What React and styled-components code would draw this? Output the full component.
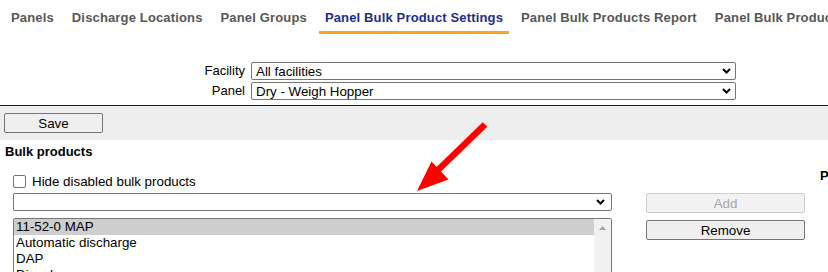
import React from "react";
import styled, { createGlobalStyle } from "styled-components";

const Global = createGlobalStyle`
  html, body { margin: 0; padding: 0; background: #fff; overflow: hidden; }
  body { font-family: "Liberation Sans", Arial, sans-serif; color: #000; }
  * { box-sizing: border-box; }
`;

const Page = styled.div`
  position: relative;
  width: 100%;
  height: 272px;
  overflow: hidden;
`;

const TabBar = styled.nav`
  display: flex;
  gap: 6px;
  padding-left: 5px;
  white-space: nowrap;
  overflow: hidden;
`;

const Tab = styled.a`
  flex-shrink: 0;
  padding: 9px 6px 4px;
  line-height: 18px;
  font-size: 13px;
  letter-spacing: 0.15px;
  font-weight: bold;
  text-decoration: none;
  color: ${(p) => (p.$active ? "#232c92" : "#575757")};
  border-bottom: 3px solid ${(p) => (p.$active ? "#f5a623" : "transparent")};
`;

const FilterForm = styled.div`
  display: grid;
  grid-template-columns: 245px 485px;
  column-gap: 6px;
  row-gap: 2px;
  align-items: center;
  margin-top: 28px;
`;

const FieldLabel = styled.label`
  text-align: right;
  font-size: 13px;
  line-height: 18px;
`;

const SelectBox = styled.div`
  height: 18px;
  display: flex;
  align-items: center;
  justify-content: space-between;
  padding: 0 ${(p) => p.$padRight || 4}px 0 4px;
  border: 1px solid #767676;
  border-radius: 2px;
  background: #fff;
  font-size: 13.33px;
  white-space: nowrap;
`;

const Chevron = () => (
  <svg width="9" height="6" viewBox="0 0 9 6">
    <path d="M1 1 L4.5 4.5 L8 1" fill="none" stroke="#000" strokeWidth="2" />
  </svg>
);

const Toolbar = styled.div`
  margin-top: 5px;
  border-top: 1px solid #1a1a1a;
  background: #eeeeee;
  padding: 7px 4px;
`;

const Button = styled.button`
  display: block;
  width: ${(p) => p.$width}px;
  height: 20px;
  padding: 0;
  border: 1px solid ${(p) => (p.disabled ? "#cdcdcd" : "#767676")};
  border-radius: 2px;
  background: ${(p) => (p.disabled ? "#f2f2f2" : "#efefef")};
  color: ${(p) => (p.disabled ? "#a6a6a6" : "#000")};
  font-family: "Liberation Sans", Arial, sans-serif;
  font-size: 13.33px;
`;

const SectionTitle = styled.h2`
  margin: 4px 0 0 5px;
  font-size: 13px;
  line-height: 16px;
  font-weight: bold;
`;

const Workspace = styled.div`
  display: flex;
  margin-top: 8px;
  padding-left: 13px;
`;

const LeftCol = styled.div`
  width: 599px;
  flex-shrink: 0;
  display: flex;
  flex-direction: column;
`;

const CheckRow = styled.label`
  margin-top: 6px;
  height: 16px;
  display: flex;
  align-items: flex-start;
  gap: 6px;
  font-size: 13.33px;
  line-height: 16px;
`;

const Checkbox = styled.input`
  appearance: none;
  margin: 1px 0 0;
  width: 13px;
  height: 13px;
  border: 1px solid #767676;
  border-radius: 2px;
  background: #fff;
`;

const DropWrap = styled.div`
  margin-top: 3px;
`;

const ListBox = styled.div`
  margin-top: 7px;
  height: 80px;
  display: flex;
  border: 1px solid #767676;
  border-radius: 2px 2px 0 0;
  overflow: hidden;
`;

const Options = styled.div`
  flex: 1;
`;

const Option = styled.div`
  height: 16px;
  line-height: 16px;
  padding: 0 2px;
  font-size: 13.33px;
  white-space: nowrap;
  background: ${(p) => (p.$selected ? "#cecece" : "transparent")};
`;

const ScrollTrack = styled.div`
  width: 17px;
  flex-shrink: 0;
  background: #f1f1f1;
  display: flex;
  justify-content: center;
  padding-top: 7px;
`;

const ButtonCol = styled.div`
  margin-left: 34px;
  width: 159px;
  flex-shrink: 0;
  padding-top: 25px;
  display: flex;
  flex-direction: column;
  gap: 7px;
`;

const SideCol = styled.div`
  margin-left: 15px;
  font-size: 13px;
  line-height: 16px;
  font-weight: bold;
  white-space: nowrap;
`;

const Overlay = styled.svg`
  position: absolute;
  top: 0;
  left: 0;
  pointer-events: none;
`;

const tabs = [
  "Panels",
  "Discharge Locations",
  "Panel Groups",
  "Panel Bulk Product Settings",
  "Panel Bulk Products Report",
  "Panel Bulk Product Usage",
];

const products = ["11-52-0 MAP", "Automatic discharge", "DAP", "Diesel", "Potash"];

export default function App() {
  return (
    <Page>
      <Global />
      <TabBar>
        {tabs.map((t) => (
          <Tab key={t} $active={t === "Panel Bulk Product Settings"}>
            {t}
          </Tab>
        ))}
      </TabBar>

      <FilterForm>
        <FieldLabel>Facility</FieldLabel>
        <SelectBox>
          <span>All facilities</span>
          <Chevron />
        </SelectBox>
        <FieldLabel>Panel</FieldLabel>
        <SelectBox>
          <span>Dry - Weigh Hopper</span>
          <Chevron />
        </SelectBox>
      </FilterForm>

      <Toolbar>
        <Button $width={99}>Save</Button>
      </Toolbar>

      <SectionTitle>Bulk products</SectionTitle>

      <Workspace>
        <LeftCol>
          <CheckRow>
            <Checkbox type="checkbox" />
            Hide disabled bulk products
          </CheckRow>
          <DropWrap>
            <SelectBox $padRight={6}>
              <span />
              <Chevron />
            </SelectBox>
          </DropWrap>
          <ListBox>
            <Options>
              {products.map((p, i) => (
                <Option key={p} $selected={i === 0}>
                  {p}
                </Option>
              ))}
            </Options>
            <ScrollTrack>
              <svg width="7" height="4" viewBox="0 0 7 4">
                <polygon points="0,4 3.5,0 7,4" fill="#a3a3a3" />
              </svg>
            </ScrollTrack>
          </ListBox>
        </LeftCol>
        <ButtonCol>
          <Button $width={159} disabled>
            Add
          </Button>
          <Button $width={159}>Remove</Button>
        </ButtonCol>
        <SideCol>Panels</SideCol>
      </Workspace>

      <Overlay width="828" height="272" viewBox="0 0 828 272">
        <line x1="485" y1="124.5" x2="437" y2="171" stroke="#ff0000" strokeWidth="6.5" />
        <polygon points="417,191 431.5,161.5 448.5,179.5" fill="#ff0000" />
      </Overlay>
    </Page>
  );
}
